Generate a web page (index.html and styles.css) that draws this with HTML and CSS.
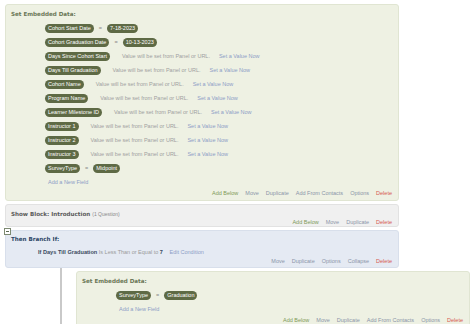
FILE: index.html
```html
<!DOCTYPE html>
<html lang="en">
<head>
    <meta charset="UTF-8">
    <title>Survey Flow</title>
    <link rel="stylesheet" href="styles.css">
</head>
<body>
    <div class="flow">
        <div class="block embed">
            <div class="block-title">Set Embedded Data:</div>
            <ul class="fields">
                <li class="field"><span class="pill">Cohort Start Date</span><span class="eq">=</span><span class="pill">7-18-2023</span></li>
                <li class="field"><span class="pill">Cohort Graduation Date</span><span class="eq">=</span><span class="pill">10-13-2023</span></li>
                <li class="field"><span class="pill">Days Since Cohort Start</span><span class="note">Value will be set from Panel or URL.</span><a class="link">Set a Value Now</a></li>
                <li class="field"><span class="pill">Days Till Graduation</span><span class="note">Value will be set from Panel or URL.</span><a class="link">Set a Value Now</a></li>
                <li class="field"><span class="pill">Cohort Name</span><span class="note">Value will be set from Panel or URL.</span><a class="link">Set a Value Now</a></li>
                <li class="field"><span class="pill">Program Name</span><span class="note">Value will be set from Panel or URL.</span><a class="link">Set a Value Now</a></li>
                <li class="field"><span class="pill">Learner Milestone ID</span><span class="note">Value will be set from Panel or URL.</span><a class="link">Set a Value Now</a></li>
                <li class="field"><span class="pill">Instructor 1</span><span class="note">Value will be set from Panel or URL.</span><a class="link">Set a Value Now</a></li>
                <li class="field"><span class="pill">Instructor 2</span><span class="note">Value will be set from Panel or URL.</span><a class="link">Set a Value Now</a></li>
                <li class="field"><span class="pill">Instructor 3</span><span class="note">Value will be set from Panel or URL.</span><a class="link">Set a Value Now</a></li>
                <li class="field"><span class="pill">SurveyType</span><span class="eq">=</span><span class="pill">Midpoint</span></li>
            </ul>
            <div class="add-field"><a class="link">Add a New Field</a></div>
            <div class="actions">
                <a class="act add">Add Below</a>
                <a class="act">Move</a>
                <a class="act">Duplicate</a>
                <a class="act">Add From Contacts</a>
                <a class="act">Options</a>
                <a class="act del">Delete</a>
            </div>
        </div>

        <div class="block show">
            <div class="block-title">Show Block: Introduction <span class="count">(1 Question)</span></div>
            <div class="actions">
                <a class="act add">Add Below</a>
                <a class="act">Move</a>
                <a class="act">Duplicate</a>
                <a class="act del">Delete</a>
            </div>
        </div>

        <div class="block branch">
            <span class="toggle">
                <svg width="7" height="7" viewBox="0 0 7 7"><rect x="0.5" y="0.5" width="6" height="6" fill="#fff" stroke="#7d8a72"/><path d="M2 3.5h3" stroke="#5d6a53"/></svg>
            </span>
            <div class="block-title">Then Branch If:</div>
            <div class="condition">
                <b>If</b> <b>Days Till Graduation</b> <span class="op">Is Less Than or Equal to</span> <b>7</b> <a class="link">Edit Condition</a>
            </div>
            <div class="actions">
                <a class="act">Move</a>
                <a class="act">Duplicate</a>
                <a class="act">Options</a>
                <a class="act">Collapse</a>
                <a class="act del">Delete</a>
            </div>
        </div>

        <div class="branch-children">
            <div class="block embed">
                <div class="block-title">Set Embedded Data:</div>
                <ul class="fields">
                    <li class="field"><span class="pill">SurveyType</span><span class="eq">=</span><span class="pill">Graduation</span></li>
                </ul>
                <div class="add-field"><a class="link">Add a New Field</a></div>
                <div class="actions">
                    <a class="act add">Add Below</a>
                    <a class="act">Move</a>
                    <a class="act">Duplicate</a>
                    <a class="act">Add From Contacts</a>
                    <a class="act">Options</a>
                    <a class="act del">Delete</a>
                </div>
            </div>
        </div>
    </div>
</body>
</html>
```

FILE: styles.css
```css
:root {
    --embed-bg: #eef1e3;
    --embed-border: #e0e5d2;
    --show-bg: #f0f0f0;
    --show-border: #e2e2e2;
    --branch-bg: #e5eaf3;
    --branch-border: #d8dfeb;
    --pill-bg: #5e6a45;
    --title-green: #6a7656;
    --link-color: #8d9dc6;
    --note-color: #a0a0a0;
    --act-color: #8b95a8;
    --act-green: #7e9a58;
    --del-color: #d65a50;
}

body {
    margin: 0;
    background: #fff;
    font-family: 'Liberation Sans', Arial, sans-serif;
    font-size: 5.5px;
    overflow: hidden;
}

.flow {
    padding: 4px 0 0 5px;
}

.block {
    box-sizing: border-box;
    width: 394px;
    border: 1px solid;
    border-radius: 3px;
    padding: 4px 5px 2px 5px;
    position: relative;
}

.block + .block {
    margin-top: 3px;
}

.embed {
    background: var(--embed-bg);
    border-color: var(--embed-border);
}

.show {
    background: var(--show-bg);
    border-color: var(--show-border);
    padding-bottom: 0;
}

.branch {
    background: var(--branch-bg);
    border-color: var(--branch-border);
    padding-top: 3px;
}

.block-title {
    font-family: 'DejaVu Sans', Verdana, sans-serif;
    font-weight: bold;
    font-size: 5.6px;
    line-height: 10px;
    color: var(--title-green);
    margin-bottom: 2px;
}

.show .block-title {
    color: #5a5a5a;
    margin-bottom: 0;
}

.count {
    font-family: 'Liberation Sans', Arial, sans-serif;
    font-weight: normal;
    font-size: 5px;
    color: #8a8a8a;
}

.branch .block-title {
    color: #2c4566;
    margin-bottom: 3px;
}

.fields {
    list-style: none;
    margin: 0 0 0 34px;
    padding: 0;
}

.field {
    height: 14px;
    display: flex;
    align-items: center;
}

.pill {
    background: var(--pill-bg);
    color: #fff;
    border-radius: 5px;
    height: 9px;
    line-height: 9px;
    padding: 0 3px;
    white-space: nowrap;
}

.eq {
    color: #888;
    margin: 0 5px;
}

.note {
    color: var(--note-color);
    margin-left: 12px;
    margin-right: 9px;
}

.link {
    color: var(--link-color);
}

.add-field {
    height: 14px;
    line-height: 14px;
    margin-left: 37px;
}

.actions {
    display: flex;
    justify-content: flex-end;
    gap: 7px;
    line-height: 9px;
    padding-right: 1px;
}

.show .actions,
.branch .actions {
    line-height: 8px;
    margin-top: -1px;
}

.act {
    color: var(--act-color);
}

.act.add {
    color: var(--act-green);
}

.act.del {
    color: var(--del-color);
}

.toggle {
    position: absolute;
    left: -2px;
    top: -3px;
    line-height: 0;
}

.condition {
    line-height: 10px;
    padding-left: 27px;
    color: #9a9a9a;
    margin-bottom: 1px;
}

.condition b {
    font-size: 5.6px;
    color: #3a4a60;
}

.condition .link {
    margin-left: 5px;
}

.branch-children {
    margin-left: 55px;
    border-left: 2px solid #c9c9c9;
    padding: 3px 0 0 14px;
}
```
